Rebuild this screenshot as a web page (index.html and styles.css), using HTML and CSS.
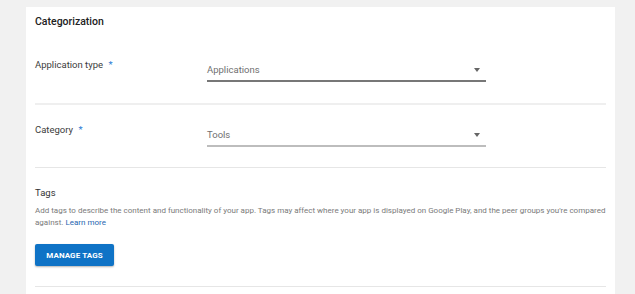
FILE: index.html
```html
<!DOCTYPE html>
<html lang="en">

<head>
     <meta charset="UTF-8">
     <meta name="viewport" content="width=device-width, initial-scale=1.0">
     <title>Categorization</title>
     <link rel="stylesheet" href="styles.css">
</head>

<body>

     <div class="card">
          <h2 class="card_title">Categorization</h2>

          <div class="form_row row_first">
               <div class="form_label">Application type <span class="req">*</span></div>
               <div class="select_box select_dark">
                    <span class="select_value">Applications</span>
                    <span class="select_arrow"></span>
               </div>
          </div>

          <div class="form_row row_second">
               <div class="form_label">Category <span class="req">*</span></div>
               <div class="select_box select_light">
                    <span class="select_value">Tools</span>
                    <span class="select_arrow"></span>
               </div>
          </div>

          <div class="tags_section">
               <div class="tags_title">Tags</div>
               <p class="tags_desc">Add tags to describe the content and functionality of your app. Tags may affect where your app is displayed on Google Play, and the peer groups you're compared against. <a href="#" class="learn_more">Learn more</a></p>
               <button class="btn_manage">Manage tags</button>
          </div>
     </div>

</body>

</html>
```

FILE: styles.css
```css
html,
body {
     margin: 0;
     padding: 0;
}

body {
     background-color: #f1f1f1;
     font-family: Roboto, "Liberation Sans", sans-serif;
     color: #333;
}

.card {
     width: 571px;
     margin: 7px 0 0 26px;
     padding: 0 9px;
     background-color: #fff;
     min-height: 287px;
}

.card_title {
     margin: 0;
     padding-top: 8px;
     font-size: 10.5px;
     font-weight: 500;
     line-height: 14px;
     color: #212121;
}

.form_row {
     display: flex;
     align-items: flex-start;
}

.row_first {
     padding: 29px 0 21px;
     border-bottom: 2px solid #efefef;
}

.row_second {
     padding: 18px 0 20px;
     border-bottom: 1px solid #e6e6e6;
}

.form_label {
     width: 172px;
     font-size: 9.5px;
     line-height: 14px;
     color: #3c3c3c;
}

.req {
     color: #2a7bd4;
     margin-left: 3px;
}

.select_box {
     width: 279px;
     margin-top: 5px;
     padding-bottom: 3px;
     display: flex;
     justify-content: space-between;
     align-items: center;
}

.select_dark {
     border-bottom: 2px solid #777;
}

.select_light {
     border-bottom: 2px solid #bdbdbd;
}

.select_value {
     font-size: 9.5px;
     line-height: 14px;
     color: #707070;
}

.select_arrow {
     width: 0;
     height: 0;
     margin-right: 6px;
     border-left: 3.5px solid transparent;
     border-right: 3.5px solid transparent;
     border-top: 4px solid #666;
}

.tags_section {
     padding: 18px 0 20px;
     border-bottom: 1px solid #e6e6e6;
}

.tags_title {
     font-size: 9.5px;
     line-height: 14px;
     color: #333;
}

.tags_desc {
     margin: 5px 0 0;
     font-size: 8px;
     line-height: 12px;
     color: #7a7a7a;
}

.learn_more {
     color: #1f66b0;
     text-decoration: none;
}

.btn_manage {
     display: block;
     margin-top: 15px;
     width: 79px;
     height: 22px;
     padding: 0;
     border: 0;
     border-radius: 2px;
     background-color: #0f73c6;
     color: #fff;
     font-family: Roboto, "Liberation Sans", sans-serif;
     font-size: 8px;
     font-weight: 700;
     text-transform: uppercase;
     letter-spacing: 0.1px;
     box-shadow: 0 1px 2px rgba(0, 0, 0, 0.3);
}
```
